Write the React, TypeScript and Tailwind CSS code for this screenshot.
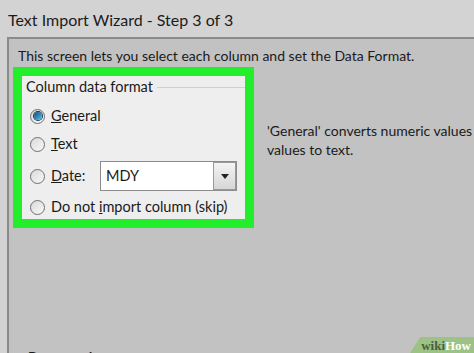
import React from "react";

const font = { fontFamily: 'Lato, "Open Sans", sans-serif' };

function Radio({ checked }: { checked?: boolean }) {
  return (
    <span className="relative flex h-[15px] w-[15px] shrink-0 items-center justify-center rounded-full border border-[#6f6f6f] bg-gradient-to-br from-[#d8d8d8] to-[#fafafa]">
      {checked && (
        <span className="h-[8px] w-[8px] rounded-full bg-gradient-to-br from-[#1d4f73] via-[#2f86b8] to-[#6fc3ea] ring-1 ring-[#123a57]" />
      )}
    </span>
  );
}

function Option({
  checked,
  children,
}: {
  checked?: boolean;
  children: React.ReactNode;
}) {
  return (
    <div className="flex items-center gap-[6px]">
      <Radio checked={checked} />
      <span className="text-[14.5px] leading-none text-[#1a1a1a]">
        {children}
      </span>
    </div>
  );
}

export default function App() {
  return (
    <div
      className="flex h-[353px] w-[474px] flex-col overflow-hidden bg-[#d3d3d3]"
      style={font}
    >
      {/* title */}
      <div className="flex h-[37px] items-center pl-[8px] pt-[2px] text-[16px] text-[#1b1b1b]">
        Text Import Wizard - Step 3 of 3
      </div>

      {/* wizard panel */}
      <div className="relative ml-[7px] flex-1 border-l-2 border-t-2 border-[#8a8a8a] bg-[#c2c2c2]">
        <p className="pl-[9px] pt-[10px] text-[14px] leading-none text-[#1a1a1a]">
          This screen lets you select each column and set the Data Format.
        </p>

        <div className="mt-[4px] flex items-start">
          {/* highlighted group */}
          <div className="ml-[4px] w-[241px] shrink-0 bg-[#22ee2b] p-[9px]">
            <div className="h-[143px] bg-[#eeeeee] pl-[4px] pt-[4px]">
              <div className="flex h-[15px] items-center gap-[4px]">
                <span className="text-[14.5px] leading-none text-[#1a1a1a]">
                  Column data format
                </span>
                <span className="h-px flex-1 bg-[#cfcfcf]" />
              </div>
              <div className="mt-[7px] flex flex-col pl-[4px]">
                <div className="flex h-[28px] items-center">
                  <Option checked>
                    <span className="underline">G</span>eneral
                  </Option>
                </div>
                <div className="flex h-[28px] items-center">
                  <Option>
                    <span className="underline">T</span>ext
                  </Option>
                </div>
                <div className="flex h-[36px] items-center">
                  <div className="w-[70px]">
                    <Option>
                      <span className="underline">D</span>ate:
                    </Option>
                  </div>
                  <div className="flex h-[30px] w-[137px] border border-[#8c8c8c] bg-white">
                    <span className="flex flex-1 items-center pl-[5px] text-[14.5px] text-[#1a1a1a]">
                      MDY
                    </span>
                    <span className="flex w-[23px] items-center justify-center border border-[#9a9a9a] bg-gradient-to-b from-[#f4f4f4] to-[#d6d6d6]">
                      <svg width="8" height="5" viewBox="0 0 8 5">
                        <path d="M0 0h8L4 5z" fill="#222" />
                      </svg>
                    </span>
                  </div>
                </div>
                <div className="flex h-[26px] items-center">
                  <Option>
                    Do not <span className="underline">i</span>mport column
                    (skip)
                  </Option>
                </div>
              </div>
            </div>
          </div>

          {/* description */}
          <p className="ml-[13px] mt-[54px] whitespace-nowrap text-[14px] leading-[19px] text-[#1a1a1a]">
            'General' converts numeric values to numbers, date
            <br />
            values to text.
          </p>
        </div>

        <p className="absolute left-[19px] top-[307px] text-[14px] font-bold text-[#1a1a1a]">
          Data preview
        </p>

        {/* watermark */}
        <div className="absolute bottom-0 right-0 flex h-[16px] w-[64px] items-center justify-end bg-[#9cc286] pr-[3px] [clip-path:polygon(16%_0,100%_0,100%_100%,0_100%)]">
          <span
            className="text-[13px] font-bold leading-none"
            style={{ fontFamily: '"Liberation Serif", serif' }}
          >
            <span className="text-[#4a5f3c]">wiki</span>
            <span className="text-white">How</span>
          </span>
        </div>
      </div>
    </div>
  );
}
